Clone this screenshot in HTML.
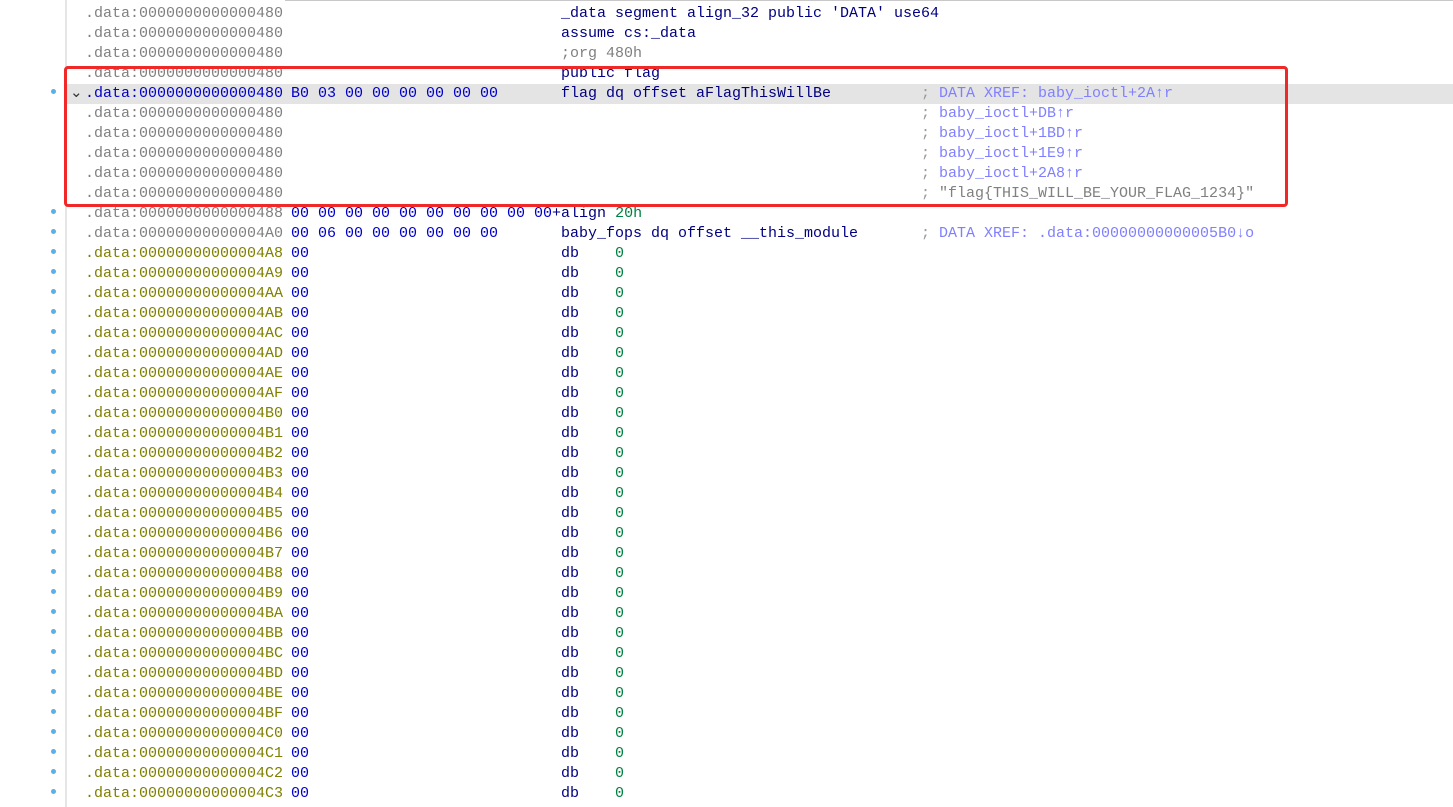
<!DOCTYPE html>
<html><head><meta charset="utf-8"><style>
html,body{margin:0;padding:0;width:1453px;height:807px;overflow:hidden;background:#fff}
body{position:relative;font-family:"Liberation Mono",monospace;font-size:15px}
.r{position:absolute;left:0;width:1453px;height:20px;line-height:20px;white-space:pre}
.r>span{position:absolute;top:0}
.r span span{position:static}
.a{left:85px;color:#808080}
.o{color:#808000}
.b{left:291px;color:#0000c8}
.m{left:561px;color:#000080}
.c{left:921px;color:#8080ff}
.sc{color:#9a9a9a}
.g{color:#008040}
.d{position:absolute;left:51px;width:5px;height:5px;border-radius:50%;background:#5ab0e6}
.sel{background:#e4e4e4;left:66px;width:1387px}
</style></head><body>
<div style="position:absolute;left:65px;top:0;width:2px;height:807px;background:#e6e6e6"></div>
<div style="position:absolute;left:285px;top:0;width:1168px;height:1px;background:#c8c8c8"></div>
<div id="rows"></div>
<div class="r" style="top:4px"><span class="a">.data:0000000000000480</span><span class="m">_data segment align_32 public 'DATA' use64</span></div>
<div class="r" style="top:24px"><span class="a">.data:0000000000000480</span><span class="m">assume cs:_data</span></div>
<div class="r" style="top:44px"><span class="a">.data:0000000000000480</span><span class="m" style="color:#808080">;org 480h</span></div>
<div class="r" style="top:64px"><span class="a">.data:0000000000000480</span><span class="m">public flag</span></div>
<div class="r sel" style="top:84px;left:66px"></div>
<div class="d" style="top:89px"></div>
<div class="r" style="top:84px"><span style="left:70px;color:#333">&#8964;</span><span class="a" style="color:#0000c8">.data:0000000000000480</span><span class="b">B0 03 00 00 00 00 00 00</span><span class="m">flag dq offset aFlagThisWillBe</span><span class="c"><span class="sc">;</span> DATA XREF: baby_ioctl+2A↑r</span></div>
<div class="r" style="top:104px"><span class="a">.data:0000000000000480</span><span class="c"><span class="sc">;</span> baby_ioctl+DB↑r</span></div>
<div class="r" style="top:124px"><span class="a">.data:0000000000000480</span><span class="c"><span class="sc">;</span> baby_ioctl+1BD↑r</span></div>
<div class="r" style="top:144px"><span class="a">.data:0000000000000480</span><span class="c"><span class="sc">;</span> baby_ioctl+1E9↑r</span></div>
<div class="r" style="top:164px"><span class="a">.data:0000000000000480</span><span class="c"><span class="sc">;</span> baby_ioctl+2A8↑r</span></div>
<div class="r" style="top:184px"><span class="a">.data:0000000000000480</span><span class="c" style="color:#808080"><span class="sc">;</span> "flag{THIS_WILL_BE_YOUR_FLAG_1234}"</span></div>
<div class="d" style="top:209px"></div>
<div class="r" style="top:204px"><span class="a">.data:0000000000000488</span><span class="b">00 00 00 00 00 00 00 00 00 00<span style="color:#000080">+align </span><span class="g">20h</span></span></div>
<div class="d" style="top:229px"></div>
<div class="r" style="top:224px"><span class="a">.data:00000000000004A0</span><span class="b">00 06 00 00 00 00 00 00</span><span class="m">baby_fops dq offset __this_module</span><span class="c"><span class="sc">;</span> DATA XREF: .data:00000000000005B0↓o</span></div>
<div style="position:absolute;left:64px;top:66px;width:1218px;height:135px;border:3px solid #f02828;border-radius:4px"></div>
<script>
var s='',a=['A8','A9','AA','AB','AC','AD','AE','AF','B0','B1','B2','B3','B4','B5','B6','B7','B8','B9','BA','BB','BC','BD','BE','BF','C0','C1','C2','C3'];
for(var i=0;i<a.length;i++){var t=244+i*20;
s+='<div class="d" style="top:'+(t+5)+'px"></div><div class="r" style="top:'+t+'px"><span class="a o">.data:00000000000004'+a[i]+'</span><span class="b">00</span><span class="m">db    <span class="g">0</span></span></div>';}
s+='<div class="d" style="top:'+(244+28*20+5)+'px"></div>';
document.getElementById('rows').innerHTML=s;
</script>
</body></html>
